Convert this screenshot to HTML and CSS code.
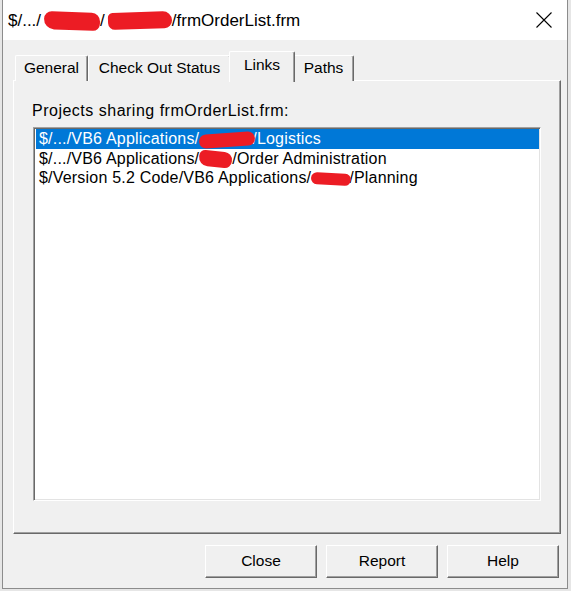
FILE: index.html
```html
<!DOCTYPE html>
<html>
<head>
<meta charset="utf-8">
<link rel="stylesheet" href="styles.css">
</head>
<body>
<div class="window">
  <div class="titlebar">
    <div class="title">$/.../<span class="redact redact-t1"></span>/<span class="redact redact-t2"></span>/frmOrderList.frm</div>
    <div class="close">
      <svg width="16" height="16" viewBox="0 0 16 16"><path d="M0.5 0.5 L15.5 15.5 M15.5 0.5 L0.5 15.5" stroke="#000" stroke-width="1.1" fill="none"/></svg>
    </div>
  </div>
  <div class="content">
    <div class="tabs">
      <div class="tab tab-general">General</div>
      <div class="tab tab-checkout">Check Out Status</div>
      <div class="tab tab-links active">Links</div>
      <div class="tab tab-paths">Paths</div>
    </div>
    <div class="panel">
      <div class="label">Projects sharing frmOrderList.frm:</div>
      <div class="listbox">
        <div class="row selected">$/.../VB6 Applications/<span class="redact redact-r1"></span>/Logistics</div>
        <div class="row">$/.../VB6 Applications/<span class="redact redact-r2"></span>/Order Administration</div>
        <div class="row">$/Version 5.2 Code/VB6 Applications/<span class="redact redact-r3"></span>/Planning</div>
      </div>
    </div>
    <div class="buttons">
      <button class="btn">Close</button>
      <button class="btn">Report</button>
      <button class="btn">Help</button>
    </div>
  </div>
</div>
</body>
</html>
```
FILE: styles.css
```css
* { box-sizing: border-box; }
html, body { margin: 0; padding: 0; }
body {
  width: 571px;
  height: 591px;
  background: #e6e6e6;
  overflow: hidden;
  font-family: "Liberation Sans", Arial, sans-serif;
}
.window {
  margin-left: 2px;
  width: 566px;
  height: 589px;
  border-left: 1px solid #8c8c8c;
  border-right: 1px solid #8c8c8c;
  border-bottom: 1px solid #8c8c8c;
  background: #f0f0f0;
  display: flex;
  flex-direction: column;
}
.titlebar {
  height: 40px;
  background: #fff;
  display: flex;
  align-items: center;
  justify-content: space-between;
}
.title {
  padding-left: 5px;
  padding-top: 1px;
  font-family: "Liberation Sans", Arial, sans-serif;
  font-size: 17px;
  color: #000;
  white-space: nowrap;
  display: flex;
  align-items: center;
}
.close {
  width: 46px;
  height: 40px;
  display: flex;
  align-items: center;
  justify-content: center;
}
.redact {
  display: inline-block;
  background: #ec1c24;
  vertical-align: middle;
}
.redact-t1 { width: 56px; height: 18px; border-radius: 9px 10px 8px 12px; transform: rotate(2deg); margin-left: 3px; }
.redact-t2 { width: 64px; height: 17px; border-radius: 6px 12px 10px 9px; margin-left: 3px; transform: rotate(-2deg); }
.redact-r1 { width: 56px; height: 14px; border-radius: 7px; transform: rotate(-4deg); margin-right: -3px; }
.redact-r2 { width: 33px; height: 16px; border-radius: 6px 8px 7px 9px; transform: rotate(6deg); }
.redact-r3 { width: 40px; height: 12px; border-radius: 6px; transform: rotate(3deg); margin-right: -2px; }

.content {
  flex: 1;
  padding: 11px 6px 10px 10px;
  display: flex;
  flex-direction: column;
}
.tabs {
  display: flex;
  align-items: flex-end;
  height: 29px;
  padding-left: 2px;
  position: relative;
  z-index: 1;
}
.tab {
  height: 26px;
  margin-bottom: -1px;
  font-size: 15.5px;
  color: #000;
  display: flex;
  align-items: center;
  justify-content: center;
  background: #f0f0f0;
  border-top: 1px solid #fff;
  border-left: 1px solid #fff;
  border-right: 1px solid #696969;
  box-shadow: inset -1px 0 #a0a0a0;
  border-radius: 2px 2px 0 0;
  padding-bottom: 1px;
}
.tab-general { width: 73px; }
.tab-checkout { width: 143px; }
.tab-links { width: 66px; }
.tab-paths { width: 61px; }
.tab.active {
  height: 31px;
  margin-left: -2px;
  margin-right: -2px;
  margin-bottom: -2px;
  padding-bottom: 5px;
  position: relative;
  z-index: 2;
}
.panel {
  height: 454px;
  border-top: 1px solid #fff;
  border-left: 1px solid #fff;
  border-right: 1px solid #696969;
  border-bottom: 1px solid #696969;
  box-shadow: inset -1px -1px #a0a0a0;
  padding: 21px 19px 0 18px;
}
.label {
  font-size: 16px;
  letter-spacing: 0.5px;
  line-height: 18px;
  height: 18px;
  color: #000;
  margin-bottom: 7px;
}
.listbox {
  margin-left: 1px;
  height: 374px;
  background: #fff;
  border-top: 1px solid #a0a0a0;
  border-left: 1px solid #a0a0a0;
  border-right: 1px solid #fff;
  border-bottom: 1px solid #fff;
  box-shadow: inset 1px 1px #696969, inset -1px -1px #e3e3e3;
  padding: 1px 1px;
}
.row {
  height: 19.5px;
  line-height: 19.5px;
  padding-left: 3px;
  margin-left: 1px;
  font-size: 16px;
  letter-spacing: 0.2px;
  color: #000;
  white-space: nowrap;
}
.row.selected {
  background: #0078d7;
  color: #fff;
}
.buttons {
  margin-top: 11px;
  display: flex;
  justify-content: flex-end;
  gap: 9px;
  padding-right: 2px;
}
.btn {
  width: 112px;
  height: 33px;
  font-family: "Liberation Sans", Arial, sans-serif;
  font-size: 15.5px;
  color: #000;
  background: #f0f0f0;
  border-top: 1px solid #fff;
  border-left: 1px solid #fff;
  border-right: 1px solid #696969;
  border-bottom: 1px solid #696969;
  box-shadow: inset -1px -1px #a0a0a0;
  border-radius: 0;
  padding: 0 0 2px 0;
  margin: 0;
}
```
